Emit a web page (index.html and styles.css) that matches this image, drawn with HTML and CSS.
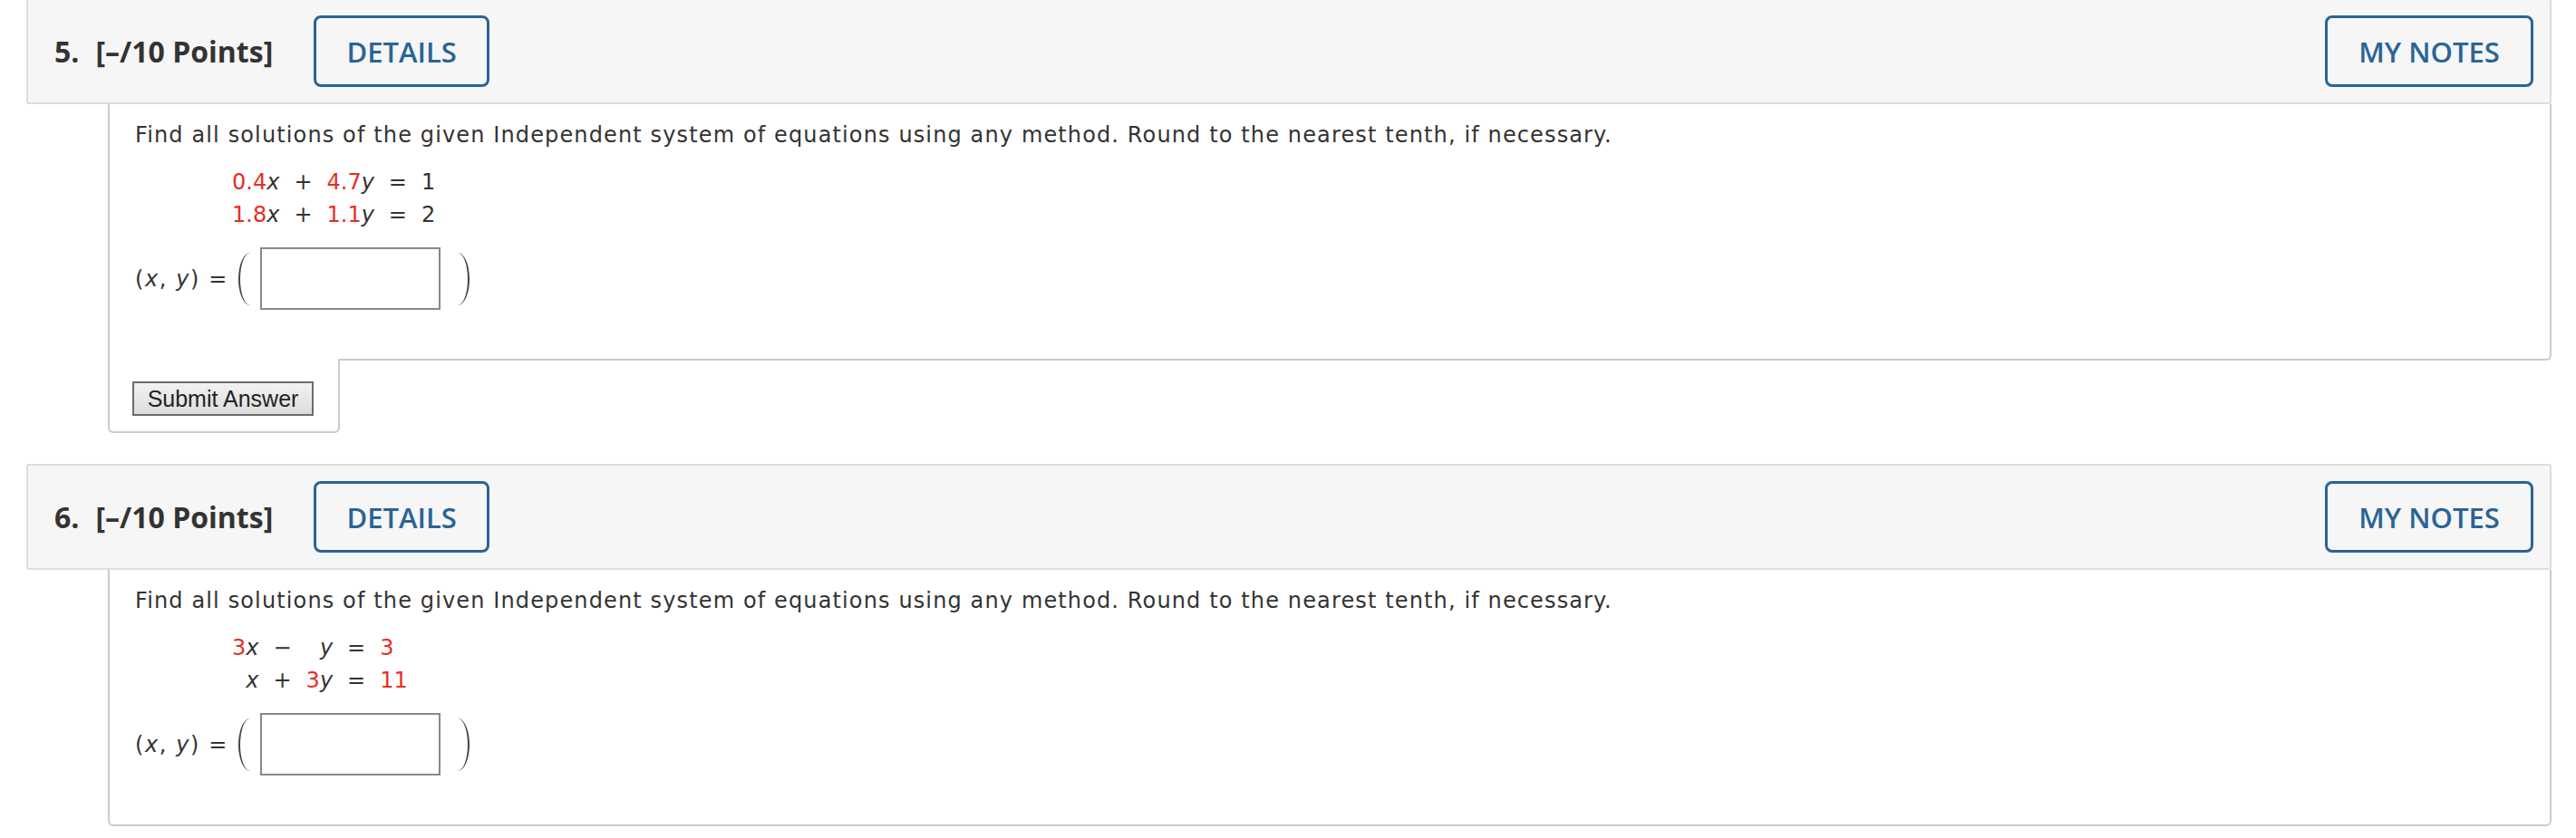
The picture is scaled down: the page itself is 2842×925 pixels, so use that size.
FILE: index.html
```html
<!DOCTYPE html>
<html lang="en">
<head>
<meta charset="utf-8">
<title>Questions</title>
<link rel="stylesheet" href="styles.css">
</head>
<body>
<div class="page">
  <section class="question">
    <div class="qhead">
      <span class="qnum">5.</span>
      <span class="qpts">[–/10 Points]</span>
      <button class="hbtn details">DETAILS</button>
      <button class="hbtn notes">MY NOTES</button>
    </div>
    <div class="qbody">
      <div class="qcontent">
        <p class="prompt">Find all solutions of the given Independent system of equations using any method. Round to the nearest tenth, if necessary.</p>
        <table class="eqs">
          <tr><td class="t1"><span class="red">0.4</span><i>x</i></td><td>+</td><td class="t2"><span class="red">4.7</span><i>y</i></td><td>=</td><td class="rhs">1</td></tr>
          <tr><td class="t1"><span class="red">1.8</span><i>x</i></td><td>+</td><td class="t2"><span class="red">1.1</span><i>y</i></td><td>=</td><td class="rhs">2</td></tr>
        </table>
        <div class="answer">
          <span class="lbl">(<i>x</i>, <i>y</i>) =</span>
          <span class="paren-l"></span>
          <span class="box"></span>
          <span class="paren-r"></span>
        </div>
      </div>
      <div class="submit-tab"><button class="submit">Submit Answer</button></div>
    </div>
  </section>

  <section class="question q6">
    <div class="qhead">
      <span class="qnum">6.</span>
      <span class="qpts">[–/10 Points]</span>
      <button class="hbtn details">DETAILS</button>
      <button class="hbtn notes">MY NOTES</button>
    </div>
    <div class="qbody">
      <div class="qcontent">
        <p class="prompt">Find all solutions of the given Independent system of equations using any method. Round to the nearest tenth, if necessary.</p>
        <table class="eqs">
          <tr><td class="t1"><span class="red">3</span><i>x</i></td><td>−</td><td class="t2"><i>y</i></td><td>=</td><td class="rhs red">3</td></tr>
          <tr><td class="t1"><i>x</i></td><td>+</td><td class="t2"><span class="red">3</span><i>y</i></td><td>=</td><td class="rhs red">11</td></tr>
        </table>
        <div class="answer">
          <span class="lbl">(<i>x</i>, <i>y</i>) =</span>
          <span class="paren-l"></span>
          <span class="box"></span>
          <span class="paren-r"></span>
        </div>
      </div>
    </div>
  </section>
</div>
</body>
</html>
```

FILE: styles.css
```css
html, body {
  margin: 0;
  padding: 0;
  background: #ffffff;
}

.page {
  margin-top: -2px;
  padding: 0 27px 0 29px;
}

.question.q6 {
  margin-top: 34px;
}

.qhead {
  display: flex;
  align-items: center;
  height: 113px;
  background: #f6f6f6;
  border: 2px solid #dddddd;
  border-radius: 3px;
  padding: 0 18px 0 29px;
  font-family: "Open Sans", "DejaVu Sans", sans-serif;
  color: #333333;
}

.qnum {
  font-weight: 700;
  font-size: 32px;
}

.qpts {
  font-weight: 700;
  font-size: 32px;
  margin-left: 18px;
}

.hbtn {
  font-family: "Open Sans", "DejaVu Sans", sans-serif;
  font-weight: 600;
  font-size: 31px;
  color: #2a6496;
  background: transparent;
  border: 3px solid #2a6496;
  border-radius: 8px;
  height: 79px;
  padding: 0;
  cursor: pointer;
}

.details {
  width: 194px;
  margin-left: 45px;
}

.notes {
  width: 230px;
  margin-left: auto;
}

.qbody {
  margin-left: 90px;
}

.qcontent {
  border: 2px solid #cccccc;
  border-top: none;
  border-radius: 0 0 6px 6px;
  padding: 20px 28px 54px 28px;
  font-family: "DejaVu Sans", Verdana, sans-serif;
  font-size: 24px;
  letter-spacing: 1.13px;
  color: #333333;
}

.question:first-child .qcontent {
  border-bottom-left-radius: 0;
}

.prompt {
  margin: 0;
  line-height: 28px;
}

.eqs {
  margin: 20px 0 0 107px;
  border-collapse: collapse;
  letter-spacing: 0;
}

.eqs td {
  padding: 0 8px;
  height: 36px;
  line-height: 28px;
  text-align: center;
}

.eqs td.t1 {
  padding-left: 0;
  text-align: right;
}

.eqs td.t2 {
  text-align: right;
}

.eqs td.rhs {
  text-align: left;
}

.red {
  color: #e72d24;
}

.answer {
  display: flex;
  align-items: center;
  margin-top: 18px;
  height: 69px;
}

.lbl {
  width: 114px;
  line-height: 28px;
  white-space: nowrap;
  letter-spacing: 1.6px;
}

.paren-l,
.paren-r {
  display: inline-block;
  box-sizing: border-box;
  width: 26px;
  height: 58px;
  border-radius: 50%;
}

.paren-l {
  border-left: 2px solid #444444;
  margin-right: -2px;
}

.paren-r {
  border-right: 2px solid #444444;
  margin-left: 6px;
}

.box {
  display: inline-block;
  box-sizing: border-box;
  width: 199px;
  height: 69px;
  border: 2px solid #888888;
  background: #ffffff;
}

.submit-tab {
  position: relative;
  margin-top: -2px;
  width: 256px;
  height: 82px;
  box-sizing: border-box;
  background: #ffffff;
  border: 2px solid #cccccc;
  border-top: none;
  border-radius: 0 0 6px 6px;
  padding: 25px 0 0 25px;
}

.submit {
  font-family: "Liberation Sans", Arial, sans-serif;
  font-size: 25px;
  color: #222222;
  width: 200px;
  height: 38px;
  padding: 0;
  border: 2px solid #6b6b6b;
  border-radius: 0;
  background: linear-gradient(#f2f2f2, #dcdcdc);
}
```
